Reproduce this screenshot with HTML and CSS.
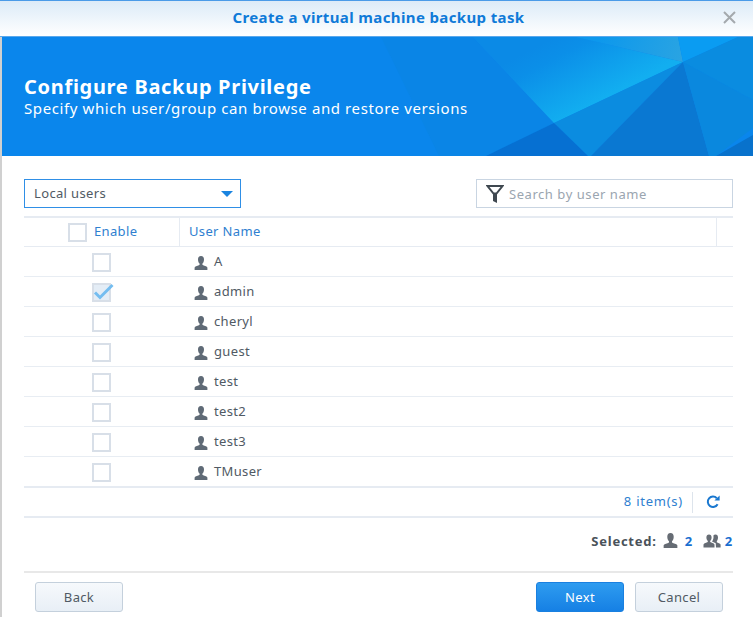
FILE: index.html

```html
<!DOCTYPE html>
<html lang="en">
<head>
  <meta charset="UTF-8" />
  <title>Create a virtual machine backup task</title>
  <link rel="stylesheet" href="styles.css">
</head>
<body>
  <svg width="0" height="0" class="defs">
    <symbol id="user" viewBox="0 0 14 14">
      <path d="M7 0C4.9 0 4 1.5 4 3.4 4 5.2 4.7 6.8 5.6 7.6V8.8C4 9.8 1.4 10 .6 11.4V14H13.4V11.4C12.6 10 10 9.8 8.4 8.8V7.6C9.3 6.8 10 5.2 10 3.4 10 1.5 9.1 0 7 0Z"/>
    </symbol>
    <symbol id="group" viewBox="0 0 18 14">
      <path d="M6 1C4.3 1 3.4 2.3 3.4 4 3.4 5.5 4 6.8 4.8 7.5V8.6C3.4 9.4 1.2 9.7 .5 11V14H11.5V11C10.8 9.7 8.6 9.4 7.2 8.6V7.5C8 6.8 8.6 5.5 8.6 4 8.6 2.3 7.7 1 6 1Z"/>
      <path d="M12.5 1C11.6 1 10.9 1.4 10.4 2 10.8 4.2 10.3 6.4 9 8L12.7 9.8 13 14H17.6V11C17 9.9 15 9.5 13.8 8.7V7.6C14.5 6.9 15 5.5 15 4 15 2.3 14.2 1 12.5 1Z"/>
    </symbol>
  </svg>

  <div class="dialog">
    <div class="title-bar">
      <span class="title">Create a virtual machine backup task</span>
      <svg class="close" width="13" height="13" viewBox="0 0 13 13"><path d="M1 1L12 12M12 1L1 12"/></svg>
    </div>

    <div class="banner">
      <svg class="facets" width="751" height="119" viewBox="2 37 751 119">
        <defs>
          <linearGradient id="glow" gradientUnits="userSpaceOnUse" x1="566" y1="118" x2="530" y2="50">
            <stop offset="0" stop-color="#12aef0"/>
            <stop offset="0.75" stop-color="#0b8fe8"/>
            <stop offset="1" stop-color="#0b8ae6"/>
          </linearGradient>
          <linearGradient id="peak" gradientUnits="userSpaceOnUse" x1="600" y1="37" x2="683" y2="62">
            <stop offset="0" stop-color="#0d98ec"/>
            <stop offset="1" stop-color="#2aa4e2"/>
          </linearGradient>
        </defs>
        <polygon points="381,37 473,37 554,123 486,156 439,156" fill="#0a85e6"/>
        <polygon points="473,37 576,37 683,62 554,123" fill="url(#glow)"/>
        <polygon points="576,37 678,37 683,62" fill="url(#peak)"/>
        <polygon points="678,37 738,37 683,62" fill="#0a9cf2"/>
        <polygon points="738,37 753,37 753,100 683,62" fill="#0a8ce0"/>
        <polygon points="554,123 683,62 591,156 588,156" fill="#0b8ce0"/>
        <polygon points="554,123 588,156 486,156" fill="#0670d2"/>
        <polygon points="683,62 709,156 591,156" fill="#0a78d2"/>
        <polygon points="683,62 753,100 753,128 716,156 709,156" fill="#0a88de"/>
        <polygon points="716,156 753,135 753,156" fill="#0872cc"/>
      </svg>
      <h1>Configure Backup Privilege</h1>
      <p>Specify which user/group can browse and restore versions</p>
    </div>

    <div class="content">
      <div class="toolbar">
        <div class="select">
          <span>Local users</span>
          <i class="caret"></i>
        </div>
        <div class="search">
          <svg width="18" height="20" viewBox="0 0 18 20"><path class="funnel" d="M1.5 2H16.5L10.5 9.5H7.5Z"/><path class="stem" d="M7 9H11V19L7 17Z"/></svg>
          <span>Search by user name</span>
        </div>
      </div>

      <div class="grid">
        <div class="grid-head">
          <div class="col-enable">
            <span class="check check-head"></span>
            <span class="head-label">Enable</span>
          </div>
          <div class="col-name">User Name</div>
          <div class="col-end"></div>
        </div>

        <div class="row">
          <div class="cell-check"><span class="check"></span></div>
          <svg class="icon-user"><use href="#user"/></svg>
          <span class="user-name">A</span>
        </div>
        <div class="row">
          <div class="cell-check">
            <span class="check checked">
              <svg width="20" height="16" viewBox="0 0 20 16"><path d="M2 8.5L7 13.5L19.5 1"/></svg>
            </span>
          </div>
          <svg class="icon-user"><use href="#user"/></svg>
          <span class="user-name">admin</span>
        </div>
        <div class="row">
          <div class="cell-check"><span class="check"></span></div>
          <svg class="icon-user"><use href="#user"/></svg>
          <span class="user-name">cheryl</span>
        </div>
        <div class="row">
          <div class="cell-check"><span class="check"></span></div>
          <svg class="icon-user"><use href="#user"/></svg>
          <span class="user-name">guest</span>
        </div>
        <div class="row">
          <div class="cell-check"><span class="check"></span></div>
          <svg class="icon-user"><use href="#user"/></svg>
          <span class="user-name">test</span>
        </div>
        <div class="row">
          <div class="cell-check"><span class="check"></span></div>
          <svg class="icon-user"><use href="#user"/></svg>
          <span class="user-name">test2</span>
        </div>
        <div class="row">
          <div class="cell-check"><span class="check"></span></div>
          <svg class="icon-user"><use href="#user"/></svg>
          <span class="user-name">test3</span>
        </div>
        <div class="row">
          <div class="cell-check"><span class="check"></span></div>
          <svg class="icon-user"><use href="#user"/></svg>
          <span class="user-name">TMuser</span>
        </div>
      </div>

      <div class="pager">
        <span class="count">8 item(s)</span>
        <span class="pager-sep"></span>
        <svg class="refresh" width="14" height="14" viewBox="0 0 14 14"><path d="M11.6 9.2A5.2 5.2 0 1 1 10.8 3.2"/><polygon points="8.4,5.4 13.6,5.4 13.6,0.6"/></svg>
      </div>

      <div class="selected">
        <b>Selected:</b>
        <svg class="icon-sel"><use href="#user"/></svg>
        <b class="num">2</b>
        <svg class="icon-sel-group"><use href="#group"/></svg>
        <b class="num num-last">2</b>
      </div>
    </div>

    <div class="footer">
      <button class="btn">Back</button>
      <div class="footer-right">
        <button class="btn btn-primary">Next</button>
        <button class="btn">Cancel</button>
      </div>
    </div>
  </div>
</body>
</html>
```

FILE: styles.css

```css
body {
  margin: 0;
  background-color: #fff;
  font-family: "Noto Sans", "Open Sans", Arial, sans-serif;
  font-size: 13px;
  letter-spacing: 0.35px;
  color: #505a64;
}

.defs {
  position: absolute;
}

.dialog {
  width: 751px;
  height: 617px;
  border-left: 2px solid #d0d0d0;
  display: flex;
  flex-direction: column;
}

.title-bar {
  height: 32px;
  border-top: 1px solid #4a9be8;
  border-bottom: 1px solid #5aa8ec;
  background: linear-gradient(#dcebf8, #ffffff);
  margin-left: -2px;
  padding: 0 0 3px 4px;
  display: flex;
  align-items: center;
  justify-content: center;
  position: relative;
}

.title {
  color: #0f7ad8;
  font-size: 15px;
  font-weight: bold;
  letter-spacing: 0.37px;
}

.close {
  position: absolute;
  right: 17px;
  top: 10px;
  fill: none;
  stroke: #a4a9ad;
  stroke-width: 2;
}

.banner {
  height: 119px;
  background-color: #0a86ec;
  color: #fff;
  padding-left: 22px;
  box-sizing: border-box;
  position: relative;
  overflow: hidden;
}

.facets {
  position: absolute;
  left: 0;
  top: 0;
}

.banner h1 {
  position: relative;
  margin: 36px 0 0;
  font-size: 20px;
  line-height: 28px;
  font-weight: bold;
  letter-spacing: 0.7px;
}

.banner p {
  position: relative;
  margin: -1px 0 0;
  font-size: 15px;
  line-height: 17px;
  letter-spacing: 0.6px;
}

.content {
  flex: 1;
  padding: 23px 20px 0 22px;
}

.toolbar {
  display: flex;
  justify-content: space-between;
  height: 29px;
}

.select {
  width: 217px;
  border: 1px solid #2f8fe6;
  box-sizing: border-box;
  display: flex;
  align-items: center;
  justify-content: space-between;
  padding: 0 7px 2px 9px;
  height: 29px;
}

.caret {
  width: 0;
  height: 0;
  margin-top: 2px;
  border-left: 6px solid transparent;
  border-right: 6px solid transparent;
  border-top: 6px solid #1a84e0;
}

.search {
  width: 257px;
  height: 29px;
  border: 1px solid #c9d5e2;
  box-sizing: border-box;
  display: flex;
  align-items: center;
  gap: 5px;
  padding-left: 9px;
  color: #9aa5b0;
  letter-spacing: 0.55px;
}

.funnel {
  fill: none;
  stroke: #3f4850;
  stroke-width: 2;
}

.stem {
  fill: #3f4850;
}

.grid {
  margin-top: 8px;
  border-top: 2px solid #e6ebf2;
}

.grid-head {
  display: flex;
  height: 28px;
  border-bottom: 1px solid #e6ebf2;
  color: #2f80d0;
}

.col-enable {
  width: 156px;
  border-right: 1px solid #e6ebf2;
  display: flex;
  align-items: center;
  gap: 7px;
  padding-left: 44px;
  box-sizing: border-box;
}

.head-label {
  padding-bottom: 2px;
}

.col-name {
  flex: 1;
  padding-left: 9px;
  line-height: 27px;
}

.col-end {
  width: 16px;
  border-left: 1px solid #e6ebf2;
}

.check {
  width: 19px;
  height: 19px;
  border: 2px solid #d8dfe8;
  box-sizing: border-box;
  display: block;
  position: relative;
  background-color: #fff;
}

.checked {
  background-color: #e4edf6;
}

.checked svg {
  position: absolute;
  left: -1px;
  top: -1px;
  overflow: visible;
  fill: none;
  stroke: #74bdf0;
  stroke-width: 3;
}

.row {
  height: 29px;
  border-bottom: 1px solid #e8edf3;
  display: flex;
  align-items: center;
}

.row:last-child {
  border-bottom: 2px solid #e6ebf2;
}

.user-name {
  padding-bottom: 2px;
}

.cell-check {
  width: 170px;
  padding-left: 68px;
  margin-top: 2px;
  box-sizing: border-box;
}

.icon-user {
  width: 14px;
  height: 14px;
  fill: #5f6a76;
  margin: 2px 6px 0 0;
}

.pager {
  height: 28px;
  border-bottom: 2px solid #e6ebf2;
  display: flex;
  align-items: center;
  justify-content: flex-end;
  padding-right: 13px;
  color: #2f80d0;
}

.count {
  letter-spacing: 0.75px;
  padding-bottom: 2px;
}

.pager-sep {
  width: 1px;
  height: 21px;
  background-color: #dde4ec;
  margin: 0 13px 0 9px;
}

.refresh {
  fill: #1a78d0;
}

.refresh path {
  fill: none;
  stroke: #1a78d0;
  stroke-width: 2;
}

.selected {
  height: 45px;
  padding-bottom: 5px;
  display: flex;
  align-items: center;
  justify-content: flex-end;
  color: #4a525a;
  letter-spacing: 0.75px;
}

.icon-sel {
  width: 15px;
  height: 15px;
  fill: #666c74;
  margin-left: 6px;
}

.icon-sel-group {
  width: 18px;
  height: 15px;
  fill: #666c74;
  margin-left: 10px;
}

.num {
  color: #1a6fd0;
  margin-left: 7px;
}

.num-last {
  margin-left: 4px;
}

.footer {
  margin: 0 20px 0 22px;
  border-top: 2px solid #e8e8e8;
  padding: 9px 10px 5px 11px;
  display: flex;
  justify-content: space-between;
}

.footer-right {
  display: flex;
  gap: 11px;
}

.btn {
  width: 88px;
  height: 30px;
  font-family: inherit;
  font-size: 13px;
  letter-spacing: 0.35px;
  color: #505a64;
  background: linear-gradient(#f6f9fc, #e8eff6);
  border: 1px solid #c4d0dc;
  border-radius: 3px;
  padding: 0;
}

.btn-primary {
  color: #fff;
  background: linear-gradient(#2e9cf0, #1680e4);
  border-color: #1a80e0;
}
```
